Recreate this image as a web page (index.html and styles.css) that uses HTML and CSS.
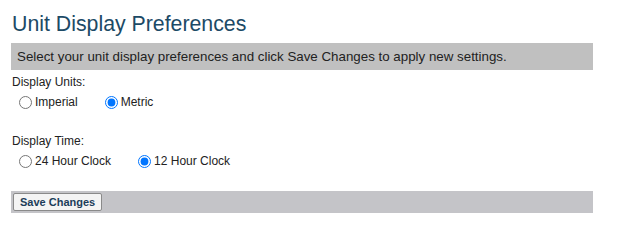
FILE: index.html
```html
<!DOCTYPE html>
<html lang="en">
<head>
    <meta charset="UTF-8">
    <title>Unit Display Preferences</title>
    <link rel="stylesheet" href="styles.css">
</head>
<body>
    <div class="page">
        <h1 class="page-title">Unit Display Preferences</h1>
        <div class="info-bar">Select your unit display preferences and click Save Changes to apply new settings.</div>

        <div class="field">
            <div class="field-label">Display Units:</div>
            <div class="options">
                <label class="option"><input type="radio" name="units" value="imperial">Imperial</label>
                <label class="option"><input type="radio" name="units" value="metric" checked>Metric</label>
            </div>
        </div>

        <div class="field">
            <div class="field-label">Display Time:</div>
            <div class="options">
                <label class="option"><input type="radio" name="clock" value="24">24 Hour Clock</label>
                <label class="option"><input type="radio" name="clock" value="12" checked>12 Hour Clock</label>
            </div>
        </div>

        <div class="action-bar">
            <button type="button" class="save-btn">Save Changes</button>
        </div>
    </div>
</body>
</html>
```

FILE: styles.css
```css
body {
    margin: 0;
    font-family: "Liberation Sans", Arial, sans-serif;
    color: #222;
    background-color: #fff;
}

.page {
    width: 582px;
    padding: 12px 0 0 11px;
}

.page-title {
    margin: 0 0 6px 1px;
    font-size: 21.3px;
    font-weight: normal;
    line-height: 25px;
    color: #1c4a66;
}

.info-bar {
    height: 27px;
    line-height: 27px;
    padding-left: 6px;
    font-size: 13.33px;
    background-color: #c0c0c0;
    color: #222;
}

.field {
    padding-top: 3px;
    margin-bottom: 18px;
    font-size: 12px;
}

.field-label {
    padding-left: 1px;
    line-height: 18px;
}

.options {
    display: flex;
    margin-top: 2px;
    padding-left: 3px;
    line-height: 18px;
}

.option {
    display: flex;
    align-items: center;
    margin-right: 22px;
}

.option input {
    margin: 0 3px 0 5px;
}

.action-bar {
    height: 22px;
    display: flex;
    align-items: center;
    margin-top: 21px;
    padding-left: 2px;
    background-color: #c4c4c8;
}

.save-btn {
    font-family: "Liberation Sans", Arial, sans-serif;
    font-size: 11px;
    font-weight: bold;
    color: #1c3d5a;
    padding: 1px 6px;
    height: 18px;
    background-color: #f4f4f4;
    border: 1px solid #8a8a8a;
    border-radius: 2px;
}
```
